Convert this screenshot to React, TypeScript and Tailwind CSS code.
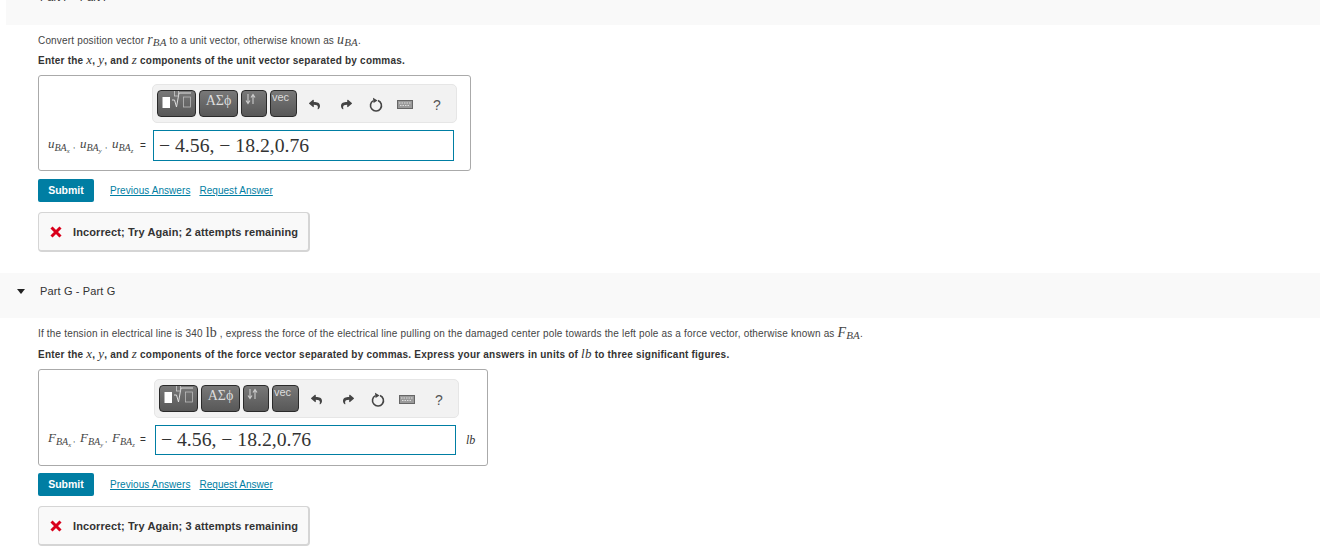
import React from "react";
import { FaReply, FaShare } from "react-icons/fa";

const serif = "font-['Liberation_Serif',serif]";

function V({ children, className = "" }: { children: React.ReactNode; className?: string }) {
  return <span className={`${serif} italic ${className}`}>{children}</span>;
}

function Sym({ base, subsub }: { base: string; subsub: string }) {
  return (
    <span className={`${serif} italic text-[#444] text-[13px] leading-none whitespace-nowrap w-[25px]`}>
      {base}
      <span className="text-[10px] align-[-3px]">
        BA
        <span className="text-[6.5px] align-[-2px]">{subsub}</span>
      </span>
    </span>
  );
}

function Label({ base, className }: { base: string; className: string }) {
  return (
    <div className={`flex items-center whitespace-nowrap ${className}`}>
      <Sym base={base} subsub="x" /><span className="w-[7px] text-[8px] leading-none">,</span>
      <Sym base={base} subsub="y" /><span className="w-[7px] text-[8px] leading-none">,</span>
      <Sym base={base} subsub="z" /><span className="ml-[3px] text-[10px] leading-none">=</span>
    </div>
  );
}

function ToolBtn({ className, children }: { className: string; children: React.ReactNode }) {
  return (
    <div className={`h-[27px] rounded-[4px] border-[1.5px] border-[#2a2a2a] bg-gradient-to-b from-[#787878] to-[#585858] text-[#dcdcdc] flex items-start justify-center overflow-hidden ${className}`}>
      {children}
    </div>
  );
}

function Toolbar() {
  return (
    <div className="w-[305px] h-[39px] rounded-[5px] border border-[#e6e6e6] bg-[#f2f2f2] flex items-center pl-[4px] pb-[1px]">
      <ToolBtn className="w-[39px] mr-[3px]">
        <svg width="36" height="25" viewBox="0 0 36 25" fill="none">
          <rect x="3.5" y="6" width="7.5" height="11" fill="#fff" />
          <path d="M13 9 L15.5 9 L17.5 16 L20 2 H32" stroke="#ddd" strokeWidth="1" />
          <rect x="15.5" y="-2" width="4" height="7" stroke="#ccc" strokeWidth="0.8" />
          <rect x="24.5" y="6" width="7" height="10" stroke="#bbb" strokeWidth="0.8" />
        </svg>
      </ToolBtn>
      <ToolBtn className={`w-[39px] mr-[3px] ${serif} text-[14px] leading-[15px] pt-[2px]`}>ΑΣϕ</ToolBtn>
      <ToolBtn className="w-[26px] mr-[3px] !justify-start pl-[3px]">
        <svg width="12" height="13" viewBox="0 0 12 13" fill="none" stroke="#ccc" strokeWidth="1.1" className="mt-[2px]">
          <path d="M3 1 V10 M1 7.5 L3 10.5 L5 7.5" />
          <path d="M8 11 V2 M6 4.5 L8 1.5 L10 4.5" />
        </svg>
      </ToolBtn>
      <ToolBtn className="w-[27px] font-['Liberation_Sans',sans-serif] text-[11px] leading-[12px] !justify-start pl-[1px]">vec</ToolBtn>
      <div className="flex items-center ml-[12px] pt-[3px] text-[#444]">
        <FaReply className="w-[11px] h-[11px] mr-[21px]" />
        <FaShare className="w-[11px] h-[11px] mr-[17px]" />
        <svg width="14" height="16" viewBox="0 0 14 16" fill="none" className="mr-[14px]">
          <path d="M4.5 3.6 A5.5 5.5 0 1 0 9 3.4" stroke="#444" strokeWidth="1.6" />
          <path d="M4 0.8 L8.5 3.4 L4.6 6 Z" fill="#444" />
        </svg>
        <svg width="16" height="9" viewBox="0 0 16 9" className="mr-[20px]">
          <rect x="0.5" y="0.5" width="15" height="8" fill="#9a9a9a" stroke="#666" />
          <path d="M2 3 H14 M3 5.5 H13" stroke="#ddd" strokeWidth="1" strokeDasharray="1.5 1" />
        </svg>
        <span className="font-['Liberation_Sans',sans-serif] text-[14px] leading-none text-[#555]">?</span>
      </div>
    </div>
  );
}

function Answer() {
  return <span className={`${serif} text-[19.7px] leading-none text-[#333]`}>− 4.56, − 18.2,0.76</span>;
}

function Foot({ n, className = "" }: { n: number; className?: string }) {
  return (
    <div className={className}>
      <div className="flex items-start">
        <button className="w-[56px] h-[23px] rounded-[2px] bg-[#007ea3] text-white text-[10.5px] font-bold">Submit</button>
        <a className="ml-[16px] mt-[5px] text-[10px] leading-[13px] tracking-[0.06px] text-[#007ea3] underline">Previous Answers</a>
        <a className="ml-[9px] mt-[5px] text-[10px] leading-[13px] tracking-[0.04px] text-[#007ea3] underline">Request Answer</a>
      </div>
      <div className="mt-[10px] w-[272px] h-[40px] rounded-[4px] border border-[#d5d5d5] border-r-2 border-b-2 bg-[#f9f9f9] flex items-center pl-[11px] pt-[1px]">
        <svg width="12" height="12" viewBox="0 0 12 12">
          <path d="M1.5 1.5 L10.5 10.5 M10.5 1.5 L1.5 10.5" stroke="#d9001b" strokeWidth="3" />
        </svg>
        <span className="ml-[11px] text-[11px] font-bold text-[#333] tracking-[0.1px]">Incorrect; Try Again; {n} attempts remaining</span>
      </div>
    </div>
  );
}

const lead = "h-[14px] text-[10px] leading-[14px] whitespace-nowrap";

export default function App() {
  return (
    <div className="w-[1320px] h-[549px] overflow-hidden bg-white font-['Liberation_Sans',sans-serif] text-[#333]">
      <div className="ml-[6px] h-[25px] bg-[#f9f9f9] overflow-hidden pl-[34px]">
        <div className="-mt-[9px] text-[11px] leading-[13px]">Part F - Part F</div>
      </div>

      <div className="pl-[38px]">
        <p className={`mt-[8px] ${lead} tracking-[0.17px] text-[#444]`}>
          Convert position vector <V className="text-[14px]">r</V><V className="text-[11px] align-[-2px]">BA</V> to a unit vector, otherwise known as <V className="text-[14px]">u</V><V className="text-[11px] align-[-2px]">BA</V>.
        </p>
        <p className={`mt-[6px] ${lead} tracking-[0.22px] font-bold`}>
          Enter the <V className="text-[13px] font-normal">x</V>, <V className="text-[13px] font-normal">y</V>, and <V className="text-[13px] font-normal">z</V> components of the unit vector separated by commas.
        </p>

        <div className="mt-[8px] w-[433px] h-[96px] rounded-[3px] border border-[#aaa] pt-[8px]">
          <div className="pl-[113px]"><Toolbar /></div>
          <div className="mt-[7px] flex items-center pl-[9px]">
            <Label base="u" className="w-[105px]" />
            <div className="w-[301px] h-[31px] border border-[#007ea3] flex items-center pl-[5px]"><Answer /></div>
          </div>
        </div>

        <Foot n={2} className="mt-[8px]" />
      </div>

      <div className="mt-[21px] h-[45px] bg-[#f9f9f9] flex items-start pt-[12px]">
        <span className="ml-[17px] mt-[4px] w-0 h-0 border-x-[4px] border-x-transparent border-t-[5px] border-t-[#222]" />
        <span className="ml-[15px] text-[11px] leading-[13px] tracking-[0.14px] text-[#333]">Part G - Part G</span>
      </div>

      <div className="pl-[38px]">
        <p className={`mt-[8px] ${lead} tracking-[0.17px] text-[#444]`}>
          If the tension in electrical line is 340 <span className={`${serif} text-[14px]`}>lb</span> , express the force of the electrical line pulling on the damaged center pole towards the left pole as a force vector, otherwise known as <V className="text-[14px]">F</V><V className="text-[11px] align-[-2px]">BA</V>.
        </p>
        <p className={`mt-[7px] ${lead} tracking-[0.22px] font-bold`}>
          Enter the <V className="text-[13px] font-normal">x</V>, <V className="text-[13px] font-normal">y</V>, and <V className="text-[13px] font-normal">z</V> components of the force vector separated by commas. Express your answers in units of <V className="text-[13px] font-normal">lb</V> to three significant figures.
        </p>

        <div className="mt-[8px] w-[450px] h-[97px] rounded-[3px] border border-[#aaa] pt-[9px]">
          <div className="pl-[115px]"><Toolbar /></div>
          <div className="mt-[7px] flex items-center pl-[9px]">
            <Label base="F" className="w-[107px]" />
            <div className="w-[301px] h-[30px] border border-[#007ea3] flex items-center pl-[5px]"><Answer /></div>
            <V className="ml-[10px] text-[12px]">lb</V>
          </div>
        </div>

        <Foot n={3} className="mt-[7px]" />
      </div>
    </div>
  );
}
